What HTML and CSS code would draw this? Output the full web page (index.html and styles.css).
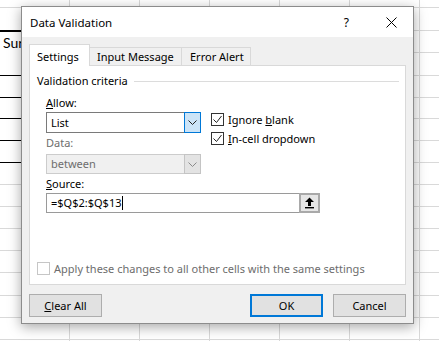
FILE: index.html
```html
<!DOCTYPE html>
<html>
<head>
<meta charset="utf-8">
<link rel="stylesheet" href="styles.css">
</head>
<body>
<div class="sheet">
  <div class="row h8"><div class="c0"></div><div class="rest"></div></div>
  <div class="row h23"><div class="c0 b"></div><div class="rest"></div></div>
  <div class="row h22"><div class="c0 top nb"><span class="celltext">Surname</span></div><div class="rest"></div></div>
  <div class="row h23"><div class="c0 b"></div><div class="rest"></div></div>
  <div class="row h22"><div class="c0 b"></div><div class="rest"></div></div>
  <div class="row h21"><div class="c0 b"></div><div class="rest"></div></div>
  <div class="row h22"><div class="c0 b"></div><div class="rest"></div></div>
  <div class="row h22"><div class="c0 b"></div><div class="rest"></div></div>
  <div class="row h22"><div class="c0"></div><div class="rest"></div></div>
  <div class="row h22"><div class="c0"></div><div class="rest"></div></div>
  <div class="row h22"><div class="c0"></div><div class="rest"></div></div>
  <div class="row h22"><div class="c0"></div><div class="rest"></div></div>
  <div class="row h22"><div class="c0"></div><div class="rest"></div></div>
  <div class="row h23"><div class="c0"></div><div class="rest"></div></div>
  <div class="row h22"><div class="c0"></div><div class="rest"></div></div>
  <div class="row h22"><div class="c0"></div><div class="rest"></div></div>
</div>

<div class="dialog">
  <div class="titlebar">
    <span class="title">Data Validation</span>
    <span class="help">?</span>
    <svg class="close" width="11" height="11" viewBox="0 0 11 11"><path d="M0.5 0.5 L10.5 10.5 M10.5 0.5 L0.5 10.5" stroke="#000" stroke-width="1" fill="none"/></svg>
  </div>
  <div class="body">
    <div class="tabs">
      <div class="tab active">Settings</div>
      <div class="tab">Input Message</div>
      <div class="tab">Error Alert</div>
    </div>
    <div class="panel">
      <div class="group-title"><span>Validation criteria</span><span class="rule"></span></div>
      <div class="criteria">
        <div class="fields">
          <div class="label"><u>A</u>llow:</div>
          <div class="combo">
            <span class="value">List</span>
            <span class="arrow hot"><svg width="9" height="5" viewBox="0 0 9 5"><path d="M0.5 0.5 L4.5 4.5 L8.5 0.5" stroke="#222" stroke-width="1" fill="none"/></svg></span>
          </div>
          <div class="label disabled">Data:</div>
          <div class="combo off">
            <span class="value">between</span>
            <span class="arrow"><svg width="9" height="5" viewBox="0 0 9 5"><path d="M0.5 0.5 L4.5 4.5 L8.5 0.5" stroke="#8a8a8a" stroke-width="1" fill="none"/></svg></span>
          </div>
        </div>
        <div class="checks">
          <div class="check"><span class="box"><svg width="11" height="11" viewBox="0 0 11 11"><path d="M1.5 5.5 L4.5 8.5 L9.5 2" stroke="#222" stroke-width="1" fill="none"/></svg></span><span>Ignore <u>b</u>lank</span></div>
          <div class="check"><span class="box"><svg width="11" height="11" viewBox="0 0 11 11"><path d="M1.5 5.5 L4.5 8.5 L9.5 2" stroke="#222" stroke-width="1" fill="none"/></svg></span><span><u>I</u>n-cell dropdown</span></div>
        </div>
      </div>
      <div class="label src"><u>S</u>ource:</div>
      <div class="source">
        <span class="value">=$Q$2:$Q$13<span class="caret"></span></span>
        <span class="refbtn"><svg width="11" height="12" viewBox="0 0 11 12"><path d="M5.5 0.5 L10 5 L7 5 L7 9 L4 9 L4 5 L1 5 Z" fill="#000"/><rect x="1" y="10" width="9" height="1.4" fill="#000"/></svg></span>
      </div>
      <div class="apply"><span class="box dis"></span><span>Apply these changes to all other cells with the same settings</span></div>
    </div>
    <div class="buttons">
      <div class="btn"><u>C</u>lear All</div>
      <div class="spacer"></div>
      <div class="btn default">OK</div>
      <div class="btn">Cancel</div>
    </div>
  </div>
</div>
</body>
</html>
```

FILE: styles.css
```css
html, body {
  margin: 0;
  padding: 0;
}
body {
  width: 439px;
  height: 341px;
  overflow: hidden;
  position: relative;
  background: #fff;
  font-family: "Noto Sans", "DejaVu Sans", sans-serif;
  font-size: 11px;
  color: #000;
}

/* spreadsheet background */
.sheet {
  display: flex;
  flex-direction: column;
  height: 341px;
  overflow: hidden;
  background-image: repeating-linear-gradient(to right, transparent 0 69px, #d9d9d9 69px 70px);
}
.row {
  display: flex;
  box-sizing: border-box;
  flex: none;
}
.h8 { height: 8px; }
.h21 { height: 21px; }
.h22 { height: 22px; }
.h23 { height: 23px; }
.c0 {
  width: 69px;
  box-sizing: border-box;
  border-bottom: 1px solid #d9d9d9;
  display: flex;
  align-items: center;
  overflow: hidden;
}
.c0.b { border-bottom-color: #000; }
.c0.top { border-top: 1px solid #000; }
.c0.nb { border-bottom-color: transparent; }
.rest {
  flex: 1;
  border-bottom: 1px solid #d9d9d9;
}
.celltext {
  padding-left: 3px;
  font-family: "Lato", "Noto Sans", sans-serif;
  font-size: 14px;
  white-space: nowrap;
  margin-top: 1px;
}

/* dialog */
.dialog {
  position: absolute;
  left: 21px;
  top: 6px;
  width: 393px;
  height: 318px;
  box-sizing: border-box;
  border: 1px solid #8c8c8c;
  background: #f0f0f0;
  box-shadow: 0 3px 12px rgba(0, 0, 0, 0.35);
  display: flex;
  flex-direction: column;
}
.titlebar {
  height: 30px;
  background: #fff;
  display: flex;
  align-items: center;
  flex: none;
}
.title {
  flex: 1;
  padding-left: 8px;
  font-size: 11.5px;
}
.help {
  margin-right: 37px;
  font-size: 12px;
}
.close {
  margin-right: 16px;
  display: block;
}
.body {
  flex: 1;
  padding: 7px 7px 0 7px;
  display: flex;
  flex-direction: column;
}
.tabs {
  display: flex;
  align-items: flex-end;
  height: 21px;
  position: relative;
  z-index: 1;
}
.tab {
  box-sizing: border-box;
  height: 18px;
  border: 1px solid #d9d9d9;
  border-bottom: none;
  border-left: none;
  padding-left: 7px;
  line-height: 17px;
  white-space: nowrap;
}
.tab:nth-child(2) { width: 92px; }
.tab:nth-child(3) { width: 69px; padding-left: 8px; }
.tab.active {
  width: 61px;
  height: 22px;
  margin-bottom: -1px;
  border-left: 1px solid #d9d9d9;
  background: #fff;
  padding-top: 3px;
}
.panel {
  box-sizing: border-box;
  width: 377px;
  height: 220px;
  border: 1px solid #d9d9d9;
  background: #fff;
  padding: 7px 6px 0 0;
  display: flex;
  flex-direction: column;
  flex: none;
}
.group-title {
  display: flex;
  align-items: center;
  height: 16px;
  padding-left: 7px;
  line-height: 16px;
}
.rule {
  flex: 1;
  height: 1px;
  background: #dcdcdc;
  margin-left: 6px;
}
.criteria {
  display: flex;
  padding-left: 16px;
}
.fields {
  width: 155px;
  display: flex;
  flex-direction: column;
}
.label {
  line-height: 16px;
  height: 16px;
  margin-top: 6px;
}
.label.disabled {
  color: #6d6d6d;
  margin-top: 2px;
}
.label.src {
  margin-left: 16px;
  margin-top: 2px;
}
.combo {
  box-sizing: border-box;
  height: 21px;
  margin-top: 1px;
  border: 1px solid #7a7a7a;
  background: #fff;
  display: flex;
  align-items: stretch;
}
.combo .value {
  flex: 1;
  padding-left: 4px;
  line-height: 19px;
}
.combo .arrow {
  width: 17px;
  box-sizing: border-box;
  display: flex;
  align-items: center;
  justify-content: center;
  margin: -1px -1px -1px 0;
}
.combo .arrow.hot {
  background: #cce4f7;
  border: 1px solid #0078d7;
}
.combo.off {
  height: 20px;
  margin-top: 3px;
  border-color: #cccccc;
  background: #f0f0f0;
  color: #6d6d6d;
}
.combo.off .value { line-height: 18px; }
.combo.off .arrow {
  background: #e3e3e3;
  border: 1px solid #c4c4c4;
}
.checks {
  margin-left: 10px;
  padding-top: 21px;
  display: flex;
  flex-direction: column;
}
.check {
  display: flex;
  align-items: center;
  height: 19px;
  gap: 4px;
  white-space: nowrap;
}
.check .box { margin-top: -1px; }
.box {
  box-sizing: border-box;
  width: 13px;
  height: 13px;
  border: 1px solid #333;
  background: #fff;
  display: flex;
  align-items: center;
  justify-content: center;
  flex: none;
}
.box.dis {
  border-color: #c6c6c6;
}
.source {
  box-sizing: border-box;
  margin: 1px 0 0 16px;
  width: 274px;
  height: 20px;
  border: 1px solid #9a9a9a;
  display: flex;
}
.source .value {
  flex: 1;
  padding-left: 4px;
  line-height: 18px;
  display: flex;
  align-items: center;
}
.caret {
  display: inline-block;
  width: 1px;
  height: 14px;
  background: #000;
  margin-left: 1px;
}
.refbtn {
  box-sizing: border-box;
  width: 21px;
  margin: -1px -1px -1px 0;
  border: 2px solid #a9a9a9;
  background: #e6e6e6;
  display: flex;
  align-items: center;
  justify-content: center;
}
.apply {
  margin-top: 47px;
  padding-left: 7px;
  display: flex;
  align-items: center;
  gap: 4px;
  height: 16px;
  color: #6d6d6d;
  white-space: nowrap;
}
.buttons {
  display: flex;
  margin-top: 9px;
}
.spacer { flex: 1; }
.btn {
  box-sizing: border-box;
  width: 73px;
  height: 23px;
  border: 1px solid #adadad;
  background: #e1e1e1;
  display: flex;
  align-items: center;
  justify-content: center;
}
.btn.default {
  border: 2px solid #0078d7;
  margin-right: 10px;
}
```
